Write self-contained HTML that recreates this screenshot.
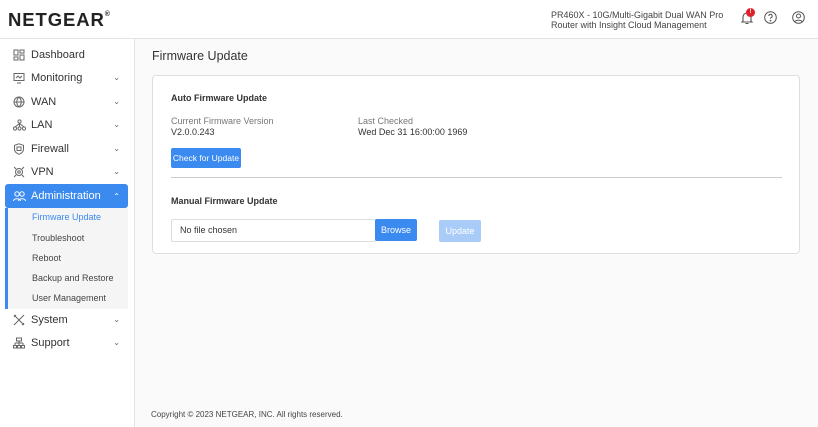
<!DOCTYPE html>
<html><head><style>
*{box-sizing:border-box;margin:0;padding:0}
body{width:818px;height:427px;overflow:hidden;font-family:"Liberation Sans",sans-serif;background:#fafafa;color:#333;position:relative}
.hdr{position:absolute;left:0;top:0;width:818px;height:39px;background:#fff;border-bottom:1px solid #e3e3e3}
.logo{position:absolute;left:8px;top:9px;font-size:18.5px;font-weight:bold;letter-spacing:0.9px;color:#222}
.logo sup{font-size:7px;letter-spacing:0;vertical-align:top;position:relative;top:2px}
.model{position:absolute;left:551px;top:10px;font-size:9px;line-height:10px;color:#444}
.side{position:absolute;left:0;top:39px;width:135px;height:388px;background:#fff;border-right:1px solid #e3e3e3}
.it{position:absolute;left:5px;width:123px;height:24px;font-size:11px;color:#333;line-height:24px;padding-left:26px}
.it svg{position:absolute;left:8px;top:6px}
.it .ch{position:absolute;right:8px;top:0;font-size:8px;color:#666}
.act{background:#3b8af0;color:#fff;border-radius:3px}
.act .ch{color:#fff}
.sub{position:absolute;left:5px;top:208px;width:123px;height:101px;background:#f5f5f5;border-left:3px solid #3b8af0}
.sub div{position:absolute;left:24px;font-size:9px;color:#444}
.card{position:absolute;left:152px;top:75px;width:648px;height:179px;background:#fff;border:1px solid #dedede;border-radius:4px}
.t{position:absolute;font-size:9px;white-space:nowrap}
.btn{position:absolute;background:#3b8af0;color:#fff;font-size:9px;text-align:center;border-radius:2px;white-space:nowrap}
</style></head><body>
<div class="hdr">
<div class="logo">NETGEAR<sup>®</sup></div>
<div class="model">PR460X - 10G/Multi-Gigabit Dual WAN Pro<br>Router with Insight Cloud Management</div>
<svg style="position:absolute;left:740px;top:11px" width="14" height="14" viewBox="0 0 14 14" fill="none" stroke="#555" stroke-width="1.1"><path d="M3 10V6a4 4 0 0 1 8 0v4l1 1H2z M5.5 12.5h3"/></svg>
<div style="position:absolute;left:746px;top:8px;width:9px;height:9px;border-radius:50%;background:#e0202b;color:#fff;font-size:6px;text-align:center;line-height:9px;font-weight:bold">!</div>
<svg style="position:absolute;left:764px;top:11px" width="13" height="13" viewBox="0 0 13 13" fill="none" stroke="#555" stroke-width="1"><circle cx="6.5" cy="6.5" r="5.8"/><path d="M4.8 5a1.7 1.7 0 1 1 2.3 1.6c-.5.2-.6.6-.6 1.2"/><circle cx="6.5" cy="9.6" r=".4" fill="#555"/></svg>
<svg style="position:absolute;left:792px;top:11px" width="13" height="13" viewBox="0 0 13 13" fill="none" stroke="#555" stroke-width="1"><circle cx="6.5" cy="6.5" r="5.8"/><circle cx="6.5" cy="5" r="2"/><path d="M2.8 10.8c1-2 6.4-2 7.4 0"/></svg>
</div>
<div class="side"></div>
<div class="it" style="top:43px"><svg width="12" height="12" fill="none" stroke="#666"><rect x="1" y="1" width="4" height="5"/><rect x="7" y="1" width="4" height="3"/><rect x="1" y="8" width="4" height="3"/><rect x="7" y="6" width="4" height="5"/></svg>Dashboard</div>
<div class="it" style="top:66px"><svg width="12" height="12" fill="none" stroke="#666"><rect x="1" y="1.5" width="10" height="7"/><path d="M4 11h4M3 6l2-2 2 2 2-2"/></svg>Monitoring<span class="ch">&#8964;</span></div>
<div class="it" style="top:90px"><svg width="12" height="12" fill="none" stroke="#666"><circle cx="6" cy="6" r="5"/><path d="M1 6h10M6 1c-3 3-3 7 0 10M6 1c3 3 3 7 0 10"/></svg>WAN<span class="ch">&#8964;</span></div>
<div class="it" style="top:113px"><svg width="13" height="12" fill="none" stroke="#666"><circle cx="6.5" cy="2.5" r="1.6"/><circle cx="2" cy="9.5" r="1.6"/><circle cx="6.5" cy="9.5" r="1.6"/><circle cx="11" cy="9.5" r="1.6"/><path d="M6.5 4v4M2 8l4.5-3.5L11 8"/></svg>LAN<span class="ch">&#8964;</span></div>
<div class="it" style="top:137px"><svg width="12" height="12" fill="none" stroke="#666"><path d="M6 .8l4.5 1.5v4c0 2.5-2 4-4.5 5C3.5 10.3 1.5 8.8 1.5 6.3v-4z"/><rect x="4" y="4" width="4" height="3.5"/></svg>Firewall<span class="ch">&#8964;</span></div>
<div class="it" style="top:160px"><svg width="12" height="12" fill="none" stroke="#666"><circle cx="6" cy="6" r="3.5"/><circle cx="6" cy="6" r="1.3"/><path d="M1 1l2 2M11 1L9 3M1 11l2-2M11 11L9 9"/></svg>VPN<span class="ch">&#8964;</span></div>
<div class="it act" style="top:184px"><svg width="13" height="12" fill="none" stroke="#fff"><circle cx="4" cy="4" r="2.2"/><circle cx="9" cy="4" r="2.2"/><path d="M.5 11c0-3 7-3 7 0M5.5 11c0-3 7-3 7 0"/></svg>Administration<span class="ch" style="top:1px">&#8963;</span></div>
<div class="sub">
<div style="top:4px;color:#3b8af0">Firmware Update</div>
<div style="top:25px">Troubleshoot</div>
<div style="top:45px">Reboot</div>
<div style="top:65px">Backup and Restore</div>
<div style="top:85px">User Management</div>
</div>
<div class="it" style="top:308px"><svg width="12" height="12" fill="none" stroke="#666"><path d="M1 1l10 10M11 1L1 11M1 3l2-2M9 11l2-2"/></svg>System<span class="ch">&#8964;</span></div>
<div class="it" style="top:331px"><svg width="12" height="12" fill="none" stroke="#666"><rect x="3.5" y="1" width="5" height="3"/><path d="M6 4v2M2 6h8M2 6v2M10 6v2M6 6v2"/><rect x="0.5" y="8.5" width="3" height="2.5"/><rect x="4.5" y="8.5" width="3" height="2.5"/><rect x="8.5" y="8.5" width="3" height="2.5"/></svg>Support<span class="ch">&#8964;</span></div>

<div class="t" style="left:152px;top:49px;font-size:12.5px;color:#333">Firmware Update</div>
<div class="card"></div>
<div class="t" style="left:171px;top:93px;font-weight:bold;font-size:9px;color:#333">Auto Firmware Update</div>
<div class="t" style="left:171px;top:116px;color:#777">Current Firmware Version</div>
<div class="t" style="left:171px;top:127px;color:#333">V2.0.0.243</div>
<div class="t" style="left:358px;top:116px;color:#777">Last Checked</div>
<div class="t" style="left:358px;top:127px;color:#333">Wed Dec 31 16:00:00 1969</div>
<div class="btn" style="left:171px;top:148px;width:70px;height:20px;line-height:20px;font-size:8.5px">Check for Update</div>
<div style="position:absolute;left:171px;top:177px;width:611px;height:1px;background:#ccc"></div>
<div class="t" style="left:171px;top:196px;font-weight:bold;font-size:9px;color:#333">Manual Firmware Update</div>
<div style="position:absolute;left:171px;top:219px;width:205px;height:23px;border:1px solid #ddd;border-radius:2px;background:#fff"></div>
<div class="t" style="left:180px;top:225px;color:#333">No file chosen</div>
<div class="btn" style="left:375px;top:219px;width:42px;height:22px;line-height:22px">Browse</div>
<div class="btn" style="left:439px;top:220px;width:42px;height:22px;line-height:22px;background:#a8cbf8">Update</div>
<div class="t" style="left:151px;top:410px;font-size:8px;color:#444">Copyright © 2023 NETGEAR, INC. All rights reserved.</div>
</body></html>
